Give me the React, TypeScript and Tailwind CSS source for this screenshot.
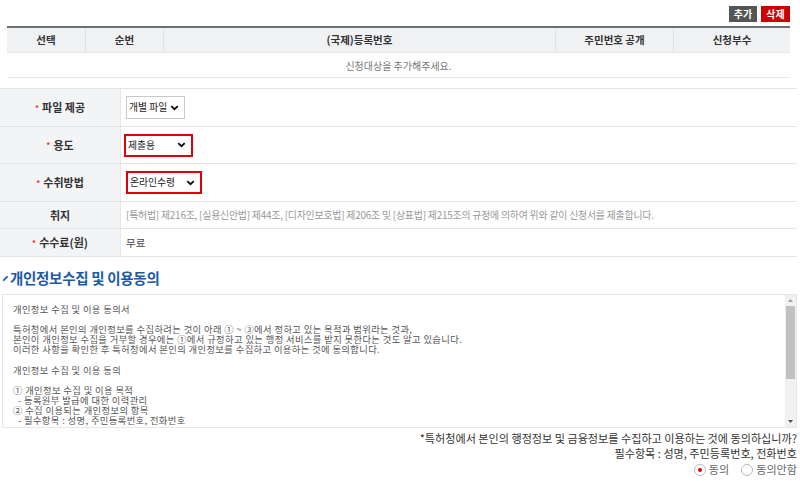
import * as React from "react";

const font = { fontFamily: '"Noto Sans CJK KR", "Noto Sans", sans-serif' };

const columns = [
  { label: "선택", w: "w-[78px]" },
  { label: "순번", w: "w-[78px]" },
  { label: "(국제)등록번호", w: "flex-1" },
  { label: "주민번호 공개", w: "w-[118px]" },
  { label: "신청부수", w: "w-[117px]" },
];

function Chevron() {
  return (
    <svg width="9" height="6" viewBox="0 0 10 7" className="shrink-0">
      <path d="M1.2 1.3 L5 5 L8.8 1.3" fill="none" stroke="#111" strokeWidth="2.2" />
    </svg>
  );
}

function Select({
  value,
  width,
  red = false,
}: {
  value: string;
  width: string;
  red?: boolean;
}) {
  return (
    <div
      className={
        "flex items-center justify-between h-[23px] pl-[2px] pr-[5px] text-[9.8px] text-[#222] bg-white whitespace-nowrap " +
        width +
        (red ? " border-2 border-[#e0000b]" : " border border-[#c9c9c9]")
      }
    >
      <span>{value}</span>
      <Chevron />
    </div>
  );
}

function FormRow({
  label,
  required,
  h,
  children,
}: {
  label: string;
  required?: boolean;
  h: string;
  children: React.ReactNode;
}) {
  return (
    <div className={"flex border-b border-[#e3e4e6] " + h}>
      <div className="w-[121px] shrink-0 bg-[#f3f4f6] flex items-center justify-center gap-[3px] text-[11px] font-bold text-[#333] border-r border-[#e6e7e9]">
        {required && <span className="text-[#e33] text-[8px]">*</span>}
        <span>{label}</span>
      </div>
      <div className="flex-1 flex items-center pl-[5px]">{children}</div>
    </div>
  );
}

export default function App() {
  return (
    <div className="w-[800px] h-[481px] bg-white overflow-hidden" style={font}>
      {/* BUTTONS */}
      <div className="flex justify-end gap-[4px] pt-[6px] pr-[10px]">
        <button className="h-[16px] w-[28px] bg-[#555] text-white text-[10px] font-bold leading-none">
          추가
        </button>
        <button className="h-[16px] w-[29px] bg-[#cc0000] text-white text-[10px] font-bold leading-none">
          삭제
        </button>
      </div>

      {/* TARGET TABLE */}
      <div className="mx-[7px] mr-[10px] mt-[4px] border-t-2 border-[#6b6e73]">
        <div className="flex h-[25px] bg-[#f0f1f3] border-b border-[#e6e7ea]">
          {columns.map((c, i) => (
            <div
              key={c.label}
              className={
                c.w +
                " flex items-center justify-center text-[10.5px] font-bold text-[#333]" +
                (i > 0 ? " border-l border-[#dfe1e4]" : "")
              }
            >
              {c.label}
            </div>
          ))}
        </div>
        <div className="h-[25px] flex items-center justify-center text-[10px] text-[#777] border-b border-[#e6e7ea]">
          신청대상을 추가해주세요.
        </div>
      </div>

      {/* FORM */}
      <div className="mt-[10px] mr-[3px] border-t border-[#e3e4e6]">
        <FormRow label="파일 제공" required h="h-[38px]">
          <Select value="개별 파일" width="w-[59px]" />
        </FormRow>
        <FormRow label="용도" required h="h-[37px]">
          <div className="-ml-[2px]">
            <Select value="제출용" width="w-[69px]" red />
          </div>
        </FormRow>
        <FormRow label="수취방법" required h="h-[38px]">
          <Select value="온라인수령" width="w-[76px]" red />
        </FormRow>
        <FormRow label="취지" h="h-[27px]">
          <span className="text-[9.9px] text-[#999] tracking-[-0.2px] whitespace-nowrap">
            [특허법] 제216조, [실용신안법] 제44조, [디자인보호법] 제206조 및 [상표법] 제215조의 규정에 의하여 위와 같이 신청서를 제출합니다.
          </span>
        </FormRow>
        <FormRow label="수수료(원)" required h="h-[28px]">
          <span className="text-[10.5px] text-[#444]">무료</span>
        </FormRow>
      </div>

      {/* CONSENT */}
      <div className="mt-[12px] pl-[2px] flex items-center gap-[1px] h-[18px]">
        <svg width="7" height="7" viewBox="0 0 7 7">
          <path d="M0.8 6.2 L1.2 4.6 L5 0.8 L6.2 2 L2.4 5.8 Z" fill="#1b5aa6" />
        </svg>
        <span className="text-[14.5px] font-bold text-[#1b5aa6] tracking-[-0.3px]">
          개인정보수집 및 이용동의
        </span>
      </div>

      <div className="mt-[7px] ml-[2px] mr-[3px] h-[134px] border border-[#e6e7ea] flex">
        <div className="flex-1 overflow-hidden pl-[10px] pt-[9px] text-[9.3px] tracking-[0.38px] leading-[10.1px] text-[#555] whitespace-pre">
          {`개인정보 수집 및 이용 동의서

특허청에서 본인의 개인정보를 수집하려는 것이 아래 ① ~ ③에서 정하고 있는 목적과 범위라는 것과,
본인이 개인정보 수집을 거부할 경우에는 ①에서 규정하고 있는 행정 서비스를 받지 못한다는 것도 알고 있습니다.
이러한 사항을 확인한 후 특허청에서 본인의 개인정보를 수집하고 이용하는 것에 동의합니다.

개인정보 수집 및 이용 동의

① 개인정보 수집 및 이용 목적
  - 등록원부 발급에 대한 이력관리
② 수집 이용되는 개인정보의 항목
  - 필수항목 : 성명, 주민등록번호, 전화번호`}
        </div>
        {/* SCROLLBAR */}
        <div className="w-[11px] bg-[#f1f1f1] flex flex-col items-center">
          <div className="h-[11px] flex items-center justify-center">
            <svg width="5" height="3" viewBox="0 0 5 3">
              <path d="M0 3 L2.5 0 L5 3 Z" fill="#a3a3a3" />
            </svg>
          </div>
          <div className="w-[9px] h-[73px] bg-[#c1c1c1]" />
          <div className="flex-1" />
          <div className="h-[11px] flex items-center justify-center">
            <svg width="5" height="3" viewBox="0 0 5 3">
              <path d="M0 0 L5 0 L2.5 3 Z" fill="#505050" />
            </svg>
          </div>
        </div>
      </div>

      <div className="mr-[3px] mt-[3px] flex flex-col items-end text-[11.1px] leading-[15px] text-[#333]">
        <div>*특허청에서 본인의 행정정보 및 금융정보를 수집하고 이용하는 것에 동의하십니까?</div>
        <div>필수항목 : 성명, 주민등록번호, 전화번호</div>
        <div className="flex items-center gap-[3px] mt-[1px] text-[#666]">
          <span className="w-[12px] h-[12px] rounded-full border border-[#bbb] flex items-center justify-center">
            <span className="w-[4px] h-[4px] rounded-full bg-[#e00]" />
          </span>
          <span>동의</span>
          <span className="ml-[9px] w-[12px] h-[12px] rounded-full border border-[#bbb]" />
          <span>동의안함</span>
        </div>
      </div>
    </div>
  );
}
